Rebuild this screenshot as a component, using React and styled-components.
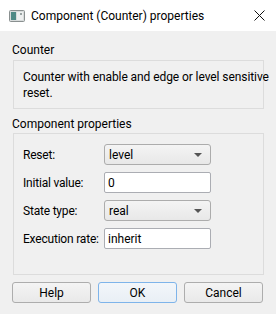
import React from 'react';
import styled, { createGlobalStyle } from 'styled-components';

const GlobalStyle = createGlobalStyle`
  html, body {
    margin: 0;
    padding: 0;
    background: #f0f0f0;
  }
  body {
    font-family: "Segoe UI", Roboto, "Liberation Sans", sans-serif;
    font-size: 12px;
    color: #000;
  }
`;

const Window = styled.div`
  width: 276px;
  height: 314px;
  display: flex;
  flex-direction: column;
  background: #f0f0f0;
  overflow: hidden;
`;

const TitleBar = styled.div`
  height: 31px;
  background: #fff;
  display: flex;
  align-items: center;
  padding: 0 9px;
  box-sizing: border-box;
  gap: 6px;
`;

const TitleText = styled.span`
  flex: 1;
  font-size: 12px;
  padding-top: 1px;
  white-space: nowrap;
`;

const Body = styled.div`
  display: flex;
  flex-direction: column;
  padding: 11px 12px 0 12px;
`;

const SectionLabel = styled.div`
  line-height: 16px;
  white-space: nowrap;
  margin-top: ${(p) => p.top || 0}px;
  margin-bottom: ${(p) => p.gap || 0}px;
`;

const GroupBox = styled.div`
  border: 1px solid #dcdcdc;
  box-sizing: border-box;
  margin-left: 1px;
  width: 251px;
  height: ${(p) => p.h}px;
  padding: ${(p) => p.pad};
`;

const Description = styled.div`
  line-height: 16px;
  white-space: nowrap;
  letter-spacing: -0.08px;
`;

const FieldGrid = styled.div`
  display: grid;
  grid-template-columns: 81px 107px;
  row-gap: 7px;
  align-items: center;
`;

const FieldLabel = styled.div`
  line-height: 16px;
  white-space: nowrap;
  letter-spacing: -0.2px;
`;

const Combo = styled.div`
  height: 21px;
  box-sizing: border-box;
  border: 1px solid #acacac;
  border-radius: 3px;
  background: linear-gradient(#f4f4f4, #e8e8e8);
  display: flex;
  align-items: center;
  justify-content: space-between;
  padding: 0 8px 0 4px;
`;

const Arrow = styled.span`
  width: 0;
  height: 0;
  border-left: 4px solid transparent;
  border-right: 4px solid transparent;
  border-top: 4px solid #555;
`;

const TextInput = styled.div`
  height: 21px;
  box-sizing: border-box;
  border: 1px solid #abadb3;
  border-radius: 2px;
  background: #fff;
  display: flex;
  align-items: center;
  padding: 0 3px;
`;

const ButtonRow = styled.div`
  display: flex;
  gap: 7px;
  margin-top: 7px;
`;

const Button = styled.div`
  width: 79px;
  height: 21px;
  box-sizing: border-box;
  border: 1px solid ${(p) => (p.primary ? '#7eb4ea' : '#adadad')};
  border-radius: 3px;
  background: ${(p) => (p.primary ? 'linear-gradient(#f2f6fa, #e9eff5)' : 'linear-gradient(#f4f4f4, #e9e9e9)')};
  display: flex;
  align-items: center;
  justify-content: center;
`;

function AppIcon() {
  return (
    <svg width="16" height="12" viewBox="0 0 16 12">
      <rect x="0.5" y="0.5" width="15" height="11" rx="1" fill="#d8dcdc" stroke="#8a9090" />
      <rect x="2" y="2" width="5" height="8" fill="#4f8a86" />
      <rect x="8" y="2" width="6" height="8" fill="#eef0f0" />
      <rect x="11" y="3" width="2" height="2" fill="#9aa4a4" />
    </svg>
  );
}

function CloseIcon() {
  return (
    <svg width="11" height="11" viewBox="0 0 11 11" style={{ marginRight: '2px' }}>
      <path d="M0.5 0.5 L10.5 10.5 M10.5 0.5 L0.5 10.5" stroke="#111" strokeWidth="1" fill="none" />
    </svg>
  );
}

export default function App() {
  return (
    <>
      <GlobalStyle />
      <Window>
        <TitleBar>
          <AppIcon />
          <TitleText>Component (Counter) properties</TitleText>
          <CloseIcon />
        </TitleBar>
        <Body>
          <SectionLabel gap={2}>Counter</SectionLabel>
          <GroupBox h={49} pad="8px 9px 0 9px">
            <Description>
              Counter with enable and edge or level sensitive
              <br />
              reset.
            </Description>
          </GroupBox>
          <SectionLabel top={7} gap={1}>Component properties</SectionLabel>
          <GroupBox h={142} pad="10px 9px 0 9px">
            <FieldGrid>
              <FieldLabel>Reset:</FieldLabel>
              <Combo>
                level
                <Arrow />
              </Combo>
              <FieldLabel>Initial value:</FieldLabel>
              <TextInput>0</TextInput>
              <FieldLabel>State type:</FieldLabel>
              <Combo>
                real
                <Arrow />
              </Combo>
              <FieldLabel>Execution rate:</FieldLabel>
              <TextInput>inherit</TextInput>
            </FieldGrid>
          </GroupBox>
          <ButtonRow>
            <Button>Help</Button>
            <Button primary>OK</Button>
            <Button>Cancel</Button>
          </ButtonRow>
        </Body>
      </Window>
    </>
  );
}
